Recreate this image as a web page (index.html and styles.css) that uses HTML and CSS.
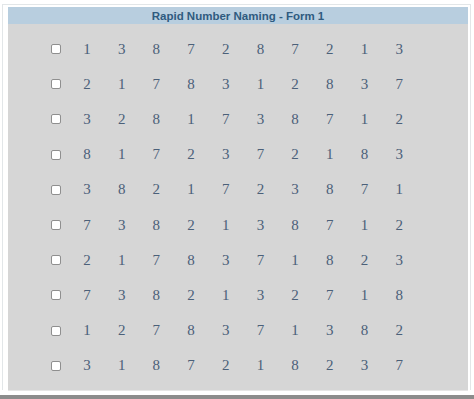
FILE: index.html
```html
<!DOCTYPE html>
<html>
<head>
<meta charset="utf-8">
<link rel="stylesheet" href="styles.css">
</head>
<body>
<div class="frame">
  <div class="panel">
    <div class="title">Rapid Number Naming - Form 1</div>
    <div class="grid">
      <div class="row"><input type="checkbox" class="cb"><span>1</span><span>3</span><span>8</span><span>7</span><span>2</span><span>8</span><span>7</span><span>2</span><span>1</span><span>3</span></div>
      <div class="row"><input type="checkbox" class="cb"><span>2</span><span>1</span><span>7</span><span>8</span><span>3</span><span>1</span><span>2</span><span>8</span><span>3</span><span>7</span></div>
      <div class="row"><input type="checkbox" class="cb"><span>3</span><span>2</span><span>8</span><span>1</span><span>7</span><span>3</span><span>8</span><span>7</span><span>1</span><span>2</span></div>
      <div class="row"><input type="checkbox" class="cb"><span>8</span><span>1</span><span>7</span><span>2</span><span>3</span><span>7</span><span>2</span><span>1</span><span>8</span><span>3</span></div>
      <div class="row"><input type="checkbox" class="cb"><span>3</span><span>8</span><span>2</span><span>1</span><span>7</span><span>2</span><span>3</span><span>8</span><span>7</span><span>1</span></div>
      <div class="row"><input type="checkbox" class="cb"><span>7</span><span>3</span><span>8</span><span>2</span><span>1</span><span>3</span><span>8</span><span>7</span><span>1</span><span>2</span></div>
      <div class="row"><input type="checkbox" class="cb"><span>2</span><span>1</span><span>7</span><span>8</span><span>3</span><span>7</span><span>1</span><span>8</span><span>2</span><span>3</span></div>
      <div class="row"><input type="checkbox" class="cb"><span>7</span><span>3</span><span>8</span><span>2</span><span>1</span><span>3</span><span>2</span><span>7</span><span>1</span><span>8</span></div>
      <div class="row"><input type="checkbox" class="cb"><span>1</span><span>2</span><span>7</span><span>8</span><span>3</span><span>7</span><span>1</span><span>3</span><span>8</span><span>2</span></div>
      <div class="row"><input type="checkbox" class="cb"><span>3</span><span>1</span><span>8</span><span>7</span><span>2</span><span>1</span><span>8</span><span>2</span><span>3</span><span>7</span></div>
    </div>
  </div>
</div>
<div class="bottombar"></div>
</body>
</html>
```

FILE: styles.css
```css
html, body {
  margin: 0;
  padding: 0;
  background: #ffffff;
  width: 474px;
  height: 399px;
  overflow: hidden;
}
body {
  display: flex;
  flex-direction: column;
}
.frame {
  margin: 4px 3px 0 2px;
  border: 1px solid #e2e6e8;
  border-bottom: none;
  padding: 2px 2px 2px 5px;
  height: 386px;
  box-sizing: border-box;
}
.panel {
  background: #d6d6d6;
  height: 384px;
  border-bottom: 1px solid #e6e6e6;
  box-sizing: border-box;
}
.title {
  height: 17px;
  background: #b8cedf;
  color: #2f5b80;
  font-family: "Liberation Sans", Arial, sans-serif;
  font-weight: bold;
  font-size: 11.5px;
  line-height: 18px;
  text-align: center;
}
.grid {
  padding: 7px 0 0 33px;
  display: flex;
  flex-direction: column;
}
.row {
  display: grid;
  grid-template-columns: 28.6px repeat(10, 34.7px);
  height: 35.2px;
  align-items: center;
}
.row span {
  text-align: center;
  font-family: "Liberation Serif", "Times New Roman", serif;
  font-size: 15px;
  line-height: 17px;
  padding-top: 1px;
  color: #4b6079;
}
.cb {
  appearance: none;
  -webkit-appearance: none;
  margin: 1px 0 0 10px;
  width: 10px;
  height: 10px;
  border: 1px solid #8f8f8f;
  border-radius: 2px;
  background: #ffffff;
  box-sizing: border-box;
}
.bottombar {
  margin-top: 5px;
  height: 4px;
  background: #8c8c8c;
}
```
